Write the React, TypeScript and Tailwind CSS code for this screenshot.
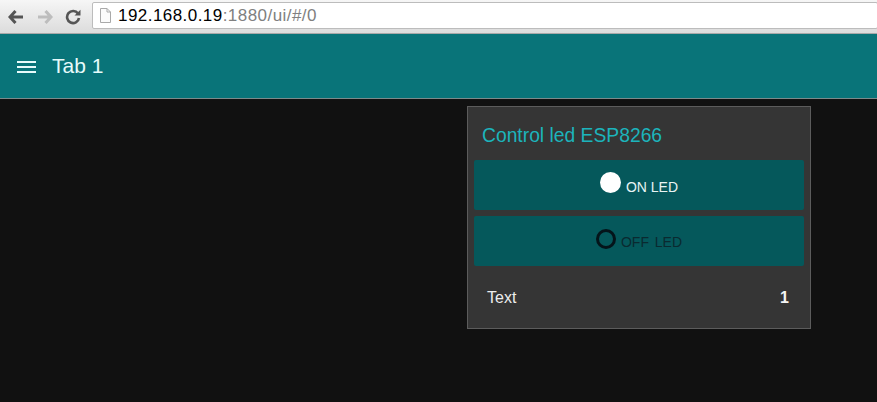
import React from "react";

function Back({ color }: { color: string }) {
  return (
    <svg width="16" height="14" viewBox="0 0 16 14">
      <path d="M7.5 1 2 7l5.5 6M2.5 7H15" fill="none" stroke={color} strokeWidth="3" />
    </svg>
  );
}

export default function App() {
  return (
    <div className="w-[877px] h-[402px] overflow-hidden bg-[#111111] flex flex-col font-['Liberation_Sans',Arial,sans-serif]">
      <div className="h-[34px] shrink-0 flex items-start bg-gradient-to-b from-[#f6f6f6] to-[#dcdcdc] border-b border-[#a8a8a8]">
        <div className="w-[92px] h-[33px] flex items-center pl-[8px] gap-[13px] shrink-0">
          <Back color="#555555" />
          <div className="-scale-x-100 flex">
            <Back color="#bdbdbd" />
          </div>
          <svg width="16" height="16" viewBox="0 0 16 16" className="ml-[-1px]">
            <path d="M13 4.6A6 6 0 1 0 14 9" fill="none" stroke="#555555" strokeWidth="2.6" />
            <path d="M9.5 6.5H15.5V0.8Z" fill="#555555" />
          </svg>
        </div>
        <div className="mt-[2px] w-[786px] h-[27px] shrink-0 bg-white border border-[#bcbcbc] rounded-[2px] flex items-center pl-[6px] gap-[6px] text-[17px] tracking-[0.45px] leading-none">
          <svg width="13" height="15" viewBox="0 0 13 15">
            <path d="M1.5.5h6.5l3.5 3.5v10.5h-10ZM8 .5V4h3.5" fill="#fbfbfb" stroke="#a9a9a9" />
          </svg>
          <span className="text-black">
            192.168.0.19<span className="text-[#808080]">:1880/ui/#/0</span>
          </span>
        </div>
      </div>

      <div className="h-[65px] shrink-0 bg-[#097479] border-b border-[#7b8a8b] flex items-center pl-[17px] gap-[16px] text-white">
        <svg width="19" height="14" viewBox="0 0 19 14" className="mt-[1px]">
          <path d="M0 2h19M0 7h19M0 12h19" stroke="#e8fbfb" strokeWidth="2" />
        </svg>
        <span className="text-[21px] leading-none text-[#e6fbfb] mb-[1px]">Tab 1</span>
      </div>

      <div className="mt-[7px] ml-[467px] w-[344px] h-[223px] bg-[#353535] border border-[#5c5c5c] px-[6px] flex flex-col">
        <div className="h-[53px] pl-[8px] pt-[19px] text-[19.3px] leading-[20px] text-[#1cb4bc] shrink-0">
          Control led ESP8266
        </div>
        <div className="w-[330px] h-[50px] rounded-[2px] bg-[#05585b] flex items-center justify-center gap-[5px] shrink-0">
          <span className="w-[21px] h-[21px] rounded-full bg-white mb-[5px]" />
          <span className="text-[14px] leading-none text-[#e8f4f4] mt-[4px]">ON LED</span>
        </div>
        <div className="w-[330px] h-[50px] mt-[6px] rounded-[2px] bg-[#05585b] flex items-center justify-center gap-[5px] shrink-0">
          <span className="w-[20px] h-[20px] rounded-full border-[3px] border-[#04141a] mb-[5px]" />
          <span className="text-[14px] leading-none text-[#0a2a30] mt-[2px] [word-spacing:2px]">OFF LED</span>
        </div>
        <div className="flex justify-between items-center pl-[13px] pr-[15px] mt-[18px] text-[16px] leading-[28px] text-[#ededed]">
          <span>Text</span>
          <span className="font-bold text-[#f5f5f5]">1</span>
        </div>
      </div>
    </div>
  );
}
